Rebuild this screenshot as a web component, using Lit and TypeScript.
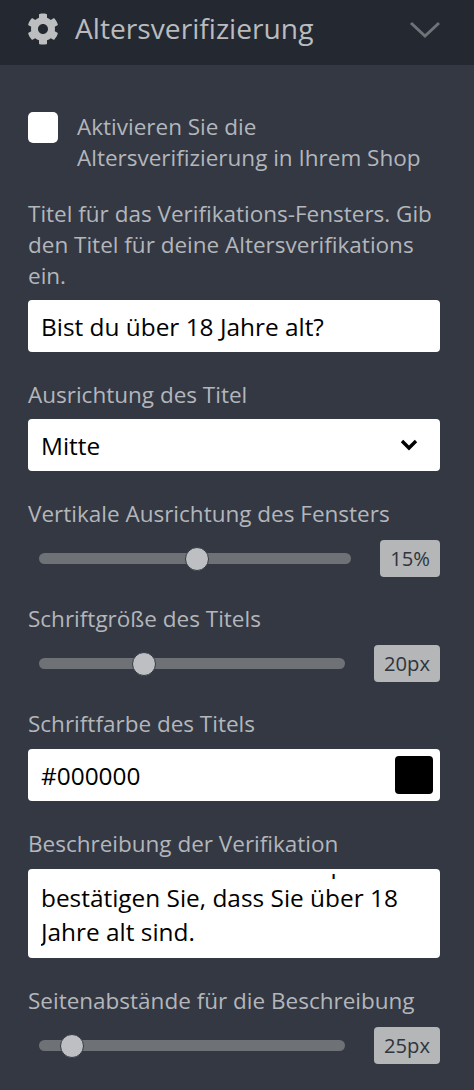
import { LitElement, html, css } from "lit";
import { customElement } from "lit/decorators.js";

const gear = html`<svg class="gear" viewBox="0 0 512 512"><path fill="currentColor" d="M487.4 315.7l-42.6-24.6c4.3-23.2 4.3-47 0-70.2l42.6-24.6c4.9-2.8 7.1-8.6 5.5-14-11.1-35.6-30-67.8-54.7-94.6-3.8-4.1-10-5.1-14.8-2.3L380.8 110c-17.9-15.4-38.5-27.3-60.8-35.1V25.8c0-5.6-3.9-10.5-9.4-11.7-36.7-8.2-74.3-7.8-109.2 0-5.5 1.2-9.4 6.1-9.4 11.7V75c-22.2 7.9-42.8 19.8-60.8 35.1L88.7 85.5c-4.9-2.8-11-1.9-14.8 2.3-24.7 26.7-43.6 58.9-54.7 94.6-1.7 5.4.6 11.2 5.5 14L67.3 221c-4.3 23.2-4.3 47 0 70.2l-42.6 24.6c-4.9 2.8-7.1 8.6-5.5 14 11.1 35.6 30 67.8 54.7 94.6 3.8 4.1 10 5.1 14.8 2.3l42.6-24.6c17.9 15.4 38.5 27.3 60.8 35.1v49.2c0 5.6 3.9 10.5 9.4 11.7 36.7 8.2 74.3 7.8 109.2 0 5.5-1.2 9.4-6.1 9.4-11.7v-49.2c22.2-7.9 42.8-19.8 60.8-35.1l42.6 24.6c4.9 2.8 11 1.9 14.8-2.3 24.7-26.7 43.6-58.9 54.7-94.6 1.5-5.5-.7-11.3-5.6-14.1zM256 336c-44.1 0-80-35.9-80-80s35.9-80 80-80 80 35.9 80 80-35.9 80-80 80z"/></svg>`;

@customElement("app-root")
export class AppRoot extends LitElement {
  static styles = css`
    :host { display: block; width: 474px; height: 1090px; overflow: hidden; background: #333843; font-family: "Open Sans", sans-serif; color: #b3b6bb; font-size: 22.5px; line-height: 31px; }
    .head { height: 65px; box-sizing: border-box; background: #242831; display: flex; align-items: center; padding: 0 33px 0 27px; color: #b9bbbe; }
    .gear { width: 32px; height: 32px; flex: none; margin-right: 16px; margin-top: -7px; color: #bcbebf; }
    .title { flex: 1; font-size: 28.2px; margin-top: -8px; }
    .chev { width: 32px; height: 20px; margin-top: -6px; }
    .body { padding: 46px 34px 0 28px; display: flex; flex-direction: column; }
    .check { display: flex; gap: 19px; }
    .box { width: 30px; height: 31px; border-radius: 5px; background: #fff; flex: none; margin-top: 1px; }
    .input { background: #fff; color: #000; height: 52px; box-sizing: border-box; border-radius: 4px; padding: 0 13px; display: flex; align-items: center; justify-content: space-between; font-size: 24.4px; }
    .sel { width: 18px; height: 12px; margin-right: 9px; margin-top: -1px; }
    .swatch { width: 38px; height: 38px; background: #000; border-radius: 4px; margin-right: -6px; }
    .slider { display: flex; align-items: center; gap: 29px; margin-top: 11px; padding-left: 11px; }
    .track { flex: 1; height: 11px; border-radius: 6px; background: #6e7175; position: relative; }
    .thumb { position: absolute; top: -6px; width: 24px; height: 24px; border-radius: 50%; background: #bdbfc2; border: 1px solid #333843; box-sizing: border-box; margin-left: -12px; }
    .val { background: #b4b6b8; color: #30343c; border-radius: 4px; height: 37px; padding: 0 10px; display: flex; align-items: center; font-size: 20.2px; }
    .ta { background: #fff; color: #000; height: 89px; box-sizing: border-box; border-radius: 4px; padding: 5px 13px 2px; font-size: 24.4px; line-height: 34px; }
    .clip { height: 82px; overflow: hidden; }
    .scroll { margin-top: -27px; }
    .m9 { margin-top: 9px; } .m10 { margin-top: 10px; } .m25 { margin-top: 25px; } .m26 { margin-top: 26px; } .m27 { margin-top: 27px; }
  `;

  slider(val: string, pos: number) {
    return html`<div class="slider"><div class="track"><div class="thumb" style="left:${pos}px"></div></div><div class="val">${val}</div></div>`;
  }

  render() {
    return html`
      <div class="head">${gear}<div class="title">Altersverifizierung</div>
        <svg class="chev" viewBox="0 0 32 20"><path d="M2 3l14 13L30 3" fill="none" stroke="#6f7378" stroke-width="3"/></svg>
      </div>
      <div class="body">
        <div class="check"><div class="box"></div><div>Aktivieren Sie die<br>Altersverifizierung in Ihrem Shop</div></div>
        <div class="m25">Titel für das Verifikations-Fensters. Gib den Titel für deine Altersverifikations ein.</div>
        <div class="input m9">Bist du über 18 Jahre alt?</div>
        <div class="m27">Ausrichtung des Titel</div>
        <div class="input m9">Mitte<svg class="sel" viewBox="0 0 18 12"><path d="M2 2l7 7 7-7" fill="none" stroke="#000" stroke-width="3.4"/></svg></div>
        <div class="m27">Vertikale Ausrichtung des Fensters</div>
        ${this.slider("15%", 158)}
        <div class="m26">Schriftgröße des Titels</div>
        ${this.slider("20px", 105)}
        <div class="m26">Schriftfarbe des Titels</div>
        <div class="input m10">#000000<div class="swatch"></div></div>
        <div class="m27">Beschreibung der Verifikation</div>
        <div class="ta m10"><div class="clip"><div class="scroll">Beim Betreten dieser Shopseite bestätigen Sie, dass Sie über 18 Jahre alt sind.</div></div></div>
        <div class="m27">Seitenabstände für die Beschreibung</div>
        ${this.slider("25px", 33)}
      </div>
    `;
  }
}
